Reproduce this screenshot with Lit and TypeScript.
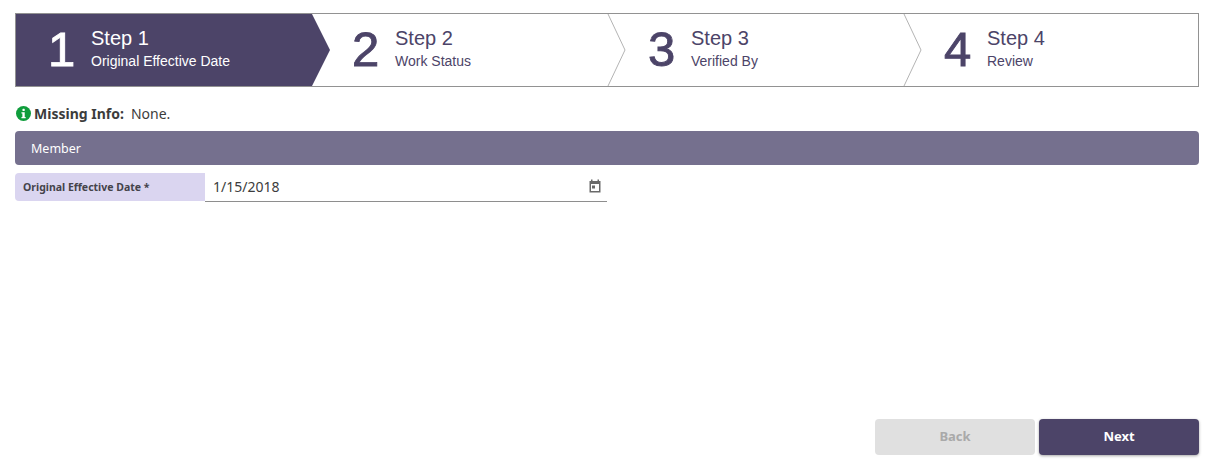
import { LitElement, html, css, svg } from "lit";
import { customElement } from "lit/decorators.js";

const STEPS = [
  ["1", "Step 1", "Original Effective Date"],
  ["2", "Step 2", "Work Status"],
  ["3", "Step 3", "Verified By"],
  ["4", "Step 4", "Review"],
];

@customElement("app-root")
export class AppRoot extends LitElement {
  static styles = css`
    :host {
      display: block;
      height: 465px;
      background: #fff;
      box-sizing: border-box;
      padding: 13px 17px 0 15px;
      font-family: "Noto Sans", "Open Sans", sans-serif;
      color: #3f3f46;
      overflow: hidden;
    }
    .page { display: flex; flex-direction: column; height: 442px; }
    .stepper {
      position: relative;
      display: grid;
      grid-template-columns: 296px 296px 296px 1fr;
      height: 74px;
      box-sizing: border-box;
      border: 1px solid #929292;
      font-family: "Liberation Sans", Arial, sans-serif;
      color: #4c4468;
    }
    .fill { position: absolute; left: 0; top: 0; width: 314px; height: 72px; }
    .chev { position: absolute; top: 0; width: 20px; height: 72px; }
    .step {
      position: relative;
      display: flex;
      align-items: center;
      padding-left: 40px;
      min-width: 0;
    }
    .step.first { padding-left: 32px; color: #fff; }
    .num {
      width: 43px;
      font-size: 49px;
      line-height: 70px;
      height: 72px;
      flex: none;
      -webkit-text-stroke: 0.9px currentColor;
    }
    .labels { display: flex; flex-direction: column; margin-top: -2px; }
    .title { font-size: 20px; line-height: 23px; }
    .sub { font-size: 14px; line-height: 22px; }
    .info {
      display: flex;
      align-items: center;
      height: 20px;
      margin-top: 16px;
      font-size: 14px;
      color: #3c3c3c;
    }
    .info svg { width: 15px; height: 15px; margin: 0 3px 0 1px; flex: none; }
    .info b { margin-right: 7px; }
    .section {
      margin-top: 8px;
      height: 34px;
      display: flex;
      align-items: center;
      padding-left: 16px;
      background: #75708e;
      border-radius: 4px;
      color: #fff;
      font-size: 12.5px;
    }
    .field { display: flex; align-items: flex-start; margin-top: 8px; width: 592px; height: 29px; }
    .label {
      width: 190px;
      height: 28px;
      box-sizing: border-box;
      padding-left: 8px;
      display: flex;
      align-items: center;
      background: #dad5f0;
      border-radius: 4px 0 0 4px;
      font-size: 10.5px;
      font-weight: 700;
      color: #44434a;
    }
    .input {
      flex: 1;
      height: 29px;
      box-sizing: border-box;
      display: flex;
      align-items: center;
      justify-content: space-between;
      padding: 0 4px 1px 8px;
      border-bottom: 1px solid #8e8e8e;
      font-size: 14px;
      color: #3c3c3c;
    }
    .input svg { width: 16px; height: 16px; margin-top: -2px; }
    .actions { margin-top: auto; display: flex; justify-content: flex-end; gap: 4px; }
    .btn {
      width: 160px;
      height: 36px;
      box-sizing: border-box;
      padding-bottom: 2px;
      display: flex;
      align-items: center;
      justify-content: center;
      border-radius: 4px;
      font-size: 13px;
      font-weight: 700;
    }
    .back { background: #e0e0e0; color: #a9a9a9; }
    .next { background: #4c4468; color: #fff; box-shadow: 0 1px 3px rgba(0,0,0,.35); }
  `;

  render() {
    return html`<div class="page">
      <div class="stepper">
        <svg class="fill" viewBox="0 0 314 72" aria-hidden="true">
          <polygon points="0,0 296,0 314,36 296,72 0,72" fill="#4c4468" />
        </svg>
        ${[592, 888].map(
          (x) => html`<svg class="chev" style="left:${x - 1}px" viewBox="0 0 20 72" aria-hidden="true">
            ${svg`<polyline points="1,0 18,36 1,72" fill="none" stroke="#b4b4b4" stroke-width="1" />`}
          </svg>`
        )}
        ${STEPS.map(
          ([n, t, s], i) => html`<div class="step ${i === 0 ? "first" : ""}">
            <div class="num">${n}</div>
            <div class="labels">
              <div class="title">${t}</div>
              <div class="sub">${s}</div>
            </div>
          </div>`
        )}
      </div>
      <div class="info">
        <svg viewBox="0 0 16 16" aria-hidden="true">
          <circle cx="8" cy="8" r="8" fill="#0f9d3c" />
          <rect x="6.9" y="3" width="2.4" height="2.4" rx="0.6" fill="#fff" />
          <path d="M5.8 6.600h3.500v5h1v1.500H5.800v-1.500h1v-3.500h-1z" fill="#fff" />
        </svg>
        <b>Missing Info:</b><span>None.</span>
      </div>
      <div class="section">Member</div>
      <div class="field">
        <div class="label">Original Effective Date *</div>
        <div class="input">
          <span>1/15/2018</span>
          <svg viewBox="0 0 16 16" aria-hidden="true">
            <path d="M4 1.500h1.500V3h5V1.500H12V3h1.500v11.500h-11V3H4zM4 6v7h8V6z" fill="#6a6a6a" fill-rule="evenodd" />
            <rect x="5" y="7.500" width="3" height="3" fill="#6a6a6a" />
          </svg>
        </div>
      </div>
      <div class="actions">
        <div class="btn back">Back</div>
        <div class="btn next">Next</div>
      </div>
    </div>`;
  }
}
